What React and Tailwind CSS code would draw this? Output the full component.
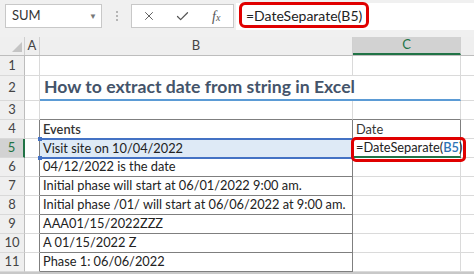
import { X, Check } from 'lucide-react'

const rows = [
  { n: 6, text: '04/12/2022 is the date' },
  { n: 7, text: 'Initial phase will start at 06/01/2022 9:00 am.' },
  { n: 8, text: 'Initial phase /01/ will start at 06/06/2022 at 9:00 am.' },
  { n: 9, text: 'AAA01/15/2022ZZZ' },
  { n: 10, text: 'A 01/15/2022 Z' },
  { n: 11, text: 'Phase 1: 06/06/2022' },
]

const RowHead = ({ n, active }) => (
  <div
    className={`w-[25px] shrink-0 flex items-center justify-center border-b border-[#d9d9d9] text-[13px] ${
      active
        ? 'bg-[#d2d2d2] text-[#217346] border-r-2 border-r-[#217346]'
        : 'bg-[#efefef] text-[#444] border-r border-r-[#bdbdbd]'
    }`}
  >
    {n}
  </div>
)

const App = () => {
  return (
    <div
      className="w-[474px] h-[274px] overflow-hidden flex flex-col bg-white text-[12.8px] text-[#222]"
      style={{ fontFamily: 'Lato, "Open Sans", sans-serif' }}
    >
      {/* Formula bar */}
      <div className="h-[37px] shrink-0 bg-[#f0f0f0] flex items-start pt-[4px]">
        <div className="ml-[5px] w-[97px] h-[24px] bg-white border border-[#c8c8c8] flex items-center justify-between pl-[6px] pr-[4px] text-[13px]">
          <span className="text-[#333]">SUM</span>
          <span className="text-[8px] text-[#777]">▼</span>
        </div>
        <div className="w-[29px] h-[24px] flex flex-col items-center justify-center gap-[2px]">
          <span className="w-[2px] h-[2px] bg-[#b5b5b5]" />
          <span className="w-[2px] h-[2px] bg-[#b5b5b5]" />
          <span className="w-[2px] h-[2px] bg-[#b5b5b5]" />
        </div>
        <div className="w-[103px] h-[24px] bg-white border border-[#c8c8c8] flex items-center text-[#555]">
          <div className="w-[34px] flex justify-center">
            <X className="w-[14px] h-[14px]" strokeWidth={1.6} />
          </div>
          <div className="w-[34px] flex justify-center">
            <Check className="w-[15px] h-[15px]" strokeWidth={2} />
          </div>
          <div className="w-[34px] flex justify-center">
            <span className="italic text-[14px]" style={{ fontFamily: '"Liberation Serif", serif' }}>
              f<span className="text-[10px]">x</span>
            </span>
          </div>
        </div>
        <div className="ml-[2px] flex-1 h-[27px] -mt-[1px] bg-white flex items-start pl-[3px]">
          <div className="h-[26px] w-[130px] -mt-[1px] border-[3px] border-[#e00000] rounded-[6px] flex items-center pl-[4px] text-[14px] text-[#222]">
            =DateSeparate(B5)
          </div>
        </div>
      </div>

      {/* Column headers */}
      <div className="h-[19px] shrink-0 flex bg-[#efefef] text-[#444] text-[13px] border-b border-[#bdbdbd]">
        <div className="w-[25px] shrink-0 relative border-r border-[#d0d0d0]">
          <div className="absolute right-[2px] bottom-[3px] w-0 h-0 border-l-[10px] border-l-transparent border-b-[10px] border-b-[#c4c4c4]" />
        </div>
        <div className="w-[15px] shrink-0 flex items-center justify-center border-r border-[#d0d0d0]">A</div>
        <div className="w-[313px] shrink-0 flex items-center justify-center border-r border-[#d0d0d0]">B</div>
        <div className="w-[108px] shrink-0 flex items-center justify-center bg-[#d2d2d2] text-[#217346] border-b-2 border-[#217346] border-r border-r-[#d0d0d0]">C</div>
        <div className="flex-1" />
      </div>

      {/* Row 1 */}
      <div className="h-[20px] shrink-0 flex">
        <RowHead n={1} />
        <div className="w-[15px] shrink-0 border-r border-b border-[#dadada]" />
        <div className="w-[313px] shrink-0 border-r border-b border-[#dadada]" />
        <div className="w-[108px] shrink-0 border-r border-b border-[#dadada]" />
        <div className="flex-1 border-b border-[#dadada]" />
      </div>

      {/* Row 2 - title */}
      <div className="h-[25px] shrink-0 flex">
        <RowHead n={2} />
        <div className="w-[15px] shrink-0 border-r border-b border-[#dadada]" />
        <div className="w-[421px] shrink-0 border-r border-r-[#dadada] border-b-2 border-b-[#5b9bd5] flex items-end pl-[4px]">
          <span className="font-bold text-[17.6px] leading-[24px] text-[#44546a] whitespace-nowrap">
            How to extract date from string in Excel
          </span>
        </div>
        <div className="flex-1 border-b border-[#dadada]" />
      </div>

      {/* Row 3 */}
      <div className="h-[19px] shrink-0 flex">
        <RowHead n={3} />
        <div className="w-[15px] shrink-0 border-r border-b border-[#dadada]" />
        <div className="w-[313px] shrink-0 border-r border-r-[#dadada] border-b border-b-[#7f7f7f]" />
        <div className="w-[108px] shrink-0 border-r border-r-[#dadada] border-b border-b-[#7f7f7f]" />
        <div className="flex-1 border-b border-[#dadada]" />
      </div>

      {/* Row 4 - headers */}
      <div className="h-[19px] shrink-0 flex">
        <RowHead n={4} />
        <div className="w-[15px] shrink-0 border-r border-r-[#7f7f7f] border-b border-b-[#dadada]" />
        <div className="w-[313px] shrink-0 border-r border-[#7f7f7f] flex items-center pl-[3px] font-semibold text-[#333]">
          Events
        </div>
        <div className="w-[108px] shrink-0 border-r border-[#7f7f7f] flex items-center pl-[3px] text-[#333]">
          Date
        </div>
        <div className="flex-1 border-b border-[#dadada]" />
      </div>

      {/* Row 5 - active */}
      <div className="h-[19px] shrink-0 flex">
        <RowHead n={5} active />
        <div className="w-[15px] shrink-0 border-r border-r-[#7f7f7f] border-b border-b-[#dadada]" />
        <div className="w-[313px] shrink-0 relative bg-[#deeaf6] border-r border-[#7f7f7f] flex items-center pl-[3px]">
          Visit site on 10/04/2022
          <div className="absolute -left-[1px] -top-[1px] -right-[1px] -bottom-[1px] border-y-2 border-[#4472c4]" />
          <div className="absolute -left-[2px] -top-[2px] w-[4px] h-[4px] bg-[#4472c4]" />
          <div className="absolute -left-[2px] -bottom-[2px] w-[4px] h-[4px] bg-[#4472c4]" />
        </div>
        <div className="w-[108px] shrink-0 relative border-r border-r-[#7f7f7f] border-b-2 border-b-[#217346] flex items-center pl-[3px] whitespace-nowrap">
          =DateSeparate(<span className="text-[#2e75b6] font-semibold">B5</span>)
          <div className="absolute -left-[2px] -top-[2px] w-[115px] h-[25px] border-[3px] border-[#e00000] rounded-[5px]" />
        </div>
        <div className="flex-1 border-b border-[#dadada]" />
      </div>

      {rows.map((r) => (
        <div key={r.n} className="h-[19px] shrink-0 flex">
          <RowHead n={r.n} />
          <div className="w-[15px] shrink-0 border-r border-r-[#7f7f7f] border-b border-b-[#dadada]" />
          <div className="w-[313px] shrink-0 border-r border-b border-[#7f7f7f] flex items-center pl-[3px] whitespace-nowrap">
            {r.text}
          </div>
          <div className="w-[108px] shrink-0 border-r border-b border-[#dadada]" />
          <div className="flex-1 border-b border-[#dadada]" />
        </div>
      ))}

      <div className="flex-1 bg-[#c8c8c8]" />
    </div>
  )
}

export default App
